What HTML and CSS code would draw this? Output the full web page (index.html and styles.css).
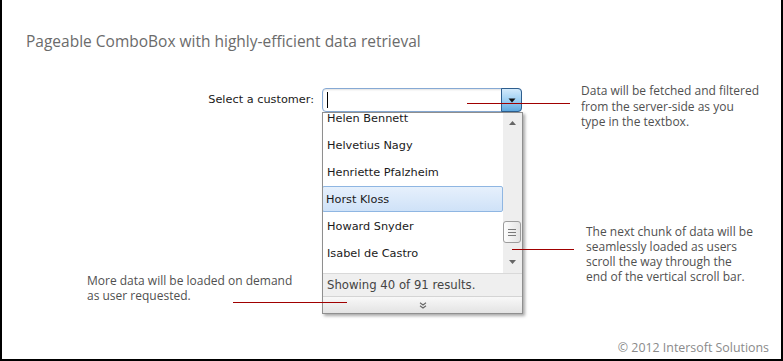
FILE: index.html
```html
<!DOCTYPE html>
<html>
<head>
<meta charset="utf-8">
<link rel="stylesheet" href="styles.css">
</head>
<body>
<div class="frame">
  <h1 class="title">Pageable ComboBox with highly-efficient data retrieval</h1>
  <div class="row">
    <label class="label">Select a customer:</label>
    <div class="combo">
      <div class="input">
        <span class="caret"></span>
        <span class="btn"><svg width="8" height="5" viewBox="0 0 8 5"><path d="M0.5 0.5 H7.5 L4 4.5 Z" fill="#111"/></svg></span>
      </div>
      <div class="dropdown">
        <div class="body">
          <div class="items">
            <div class="list">
              <div class="item">Helen Bennett</div>
              <div class="item">Helvetius Nagy</div>
              <div class="item">Henriette Pfalzheim</div>
              <div class="item selected">Horst Kloss</div>
              <div class="item">Howard Snyder</div>
              <div class="item">Isabel de Castro</div>
            </div>
          </div>
          <div class="scroll">
            <div class="arrow"><svg width="7" height="4" viewBox="0 0 7 4"><path d="M0 4 H7 L3.5 0 Z" fill="#666"/></svg></div>
            <div class="track">
              <div class="thumb"><span></span><span></span><span></span></div>
            </div>
            <div class="arrow down"><svg width="7" height="4" viewBox="0 0 7 4"><path d="M0 0 H7 L3.5 4 Z" fill="#666"/></svg></div>
          </div>
        </div>
        <div class="status">Showing 40 of 91 results.</div>
        <div class="pager"><svg width="8" height="7" viewBox="0 0 8 7"><path d="M1 0.8 L4 3 L7 0.8 M1 3.8 L4 6 L7 3.8" fill="none" stroke="#666" stroke-width="1.1"/></svg></div>
      </div>
    </div>
  </div>
  <div class="copyright">© 2012 Intersoft Solutions</div>

  <div class="note note1">Data will be fetched and filtered<br>from the server-side as you<br>type in the textbox.</div>
  <div class="note note2">The next chunk of data will be<br>seamlessly loaded as users<br>scroll the way through the<br>end of the vertical scroll bar.</div>
  <div class="note note3">More data will be loaded on demand<br>as user requested.</div>
  <div class="line line1"></div>
  <div class="line line2"></div>
  <div class="line line3"></div>
</div>
</body>
</html>
```
FILE: styles.css
```css
html, body {
  margin: 0;
  padding: 0;
  background: #fff;
}
.frame {
  position: relative;
  box-sizing: border-box;
  width: 783px;
  height: 361px;
  border: 2px solid #000;
  border-top: none;
  display: flex;
  flex-direction: column;
  overflow: hidden;
}
.title {
  margin: 0;
  padding: 31px 0 0 24px;
  font: normal 15.5px/20px "Open Sans", sans-serif;
  color: #6b6b6b;
}
.row {
  display: flex;
  align-items: center;
  gap: 8px;
  margin-top: 37px;
}
.label {
  width: 312px;
  text-align: right;
  font: 11.3px/24px "DejaVu Sans", sans-serif;
  color: #1a1a1a;
}
.combo {
  position: relative;
}
.input {
  box-sizing: border-box;
  width: 200px;
  height: 24px;
  border: 1px solid #86a9d4;
  border-radius: 4px;
  background: #fff;
  box-shadow: inset 0 1px 2px rgba(0,0,0,0.12);
  display: flex;
  align-items: center;
  justify-content: space-between;
}
.caret {
  width: 1px;
  height: 16px;
  margin-left: 4px;
  background: #000;
}
.btn {
  box-sizing: border-box;
  width: 21px;
  height: 24px;
  margin-right: -1px;
  border: 1px solid #2e5e8e;
  border-radius: 0 4px 4px 0;
  background: linear-gradient(#d3eafb, #9fd0f3 50%, #5ea9e0);
  display: flex;
  align-items: center;
  justify-content: center;
}
.dropdown {
  position: absolute;
  left: 0;
  top: 24px;
  box-sizing: border-box;
  width: 201px;
  height: 202px;
  border: 1px solid #8f8f8f;
  background: #fff;
  box-shadow: 2px 2px 3px rgba(0,0,0,0.35);
  display: flex;
  flex-direction: column;
}
.body {
  display: flex;
  height: 160px;
}
.items {
  width: 180px;
  overflow: hidden;
}
.list {
  margin-top: -8px;
}
.item {
  box-sizing: border-box;
  height: 27px;
  padding-left: 4px;
  font: 11.3px/27px "DejaVu Sans", sans-serif;
  color: #1a1a1a;
  white-space: nowrap;
}
.item.selected {
  height: 26px;
  margin-bottom: 1px;
  padding-left: 3px;
  line-height: 25px;
  border: 1px solid #8fb6e2;
  border-radius: 2px;
  background: linear-gradient(#e6f0fc, #cfe2f8);
  margin-left: -1px;
}
.scroll {
  width: 19px;
  background: #eeeeee;
  display: flex;
  flex-direction: column;
}
.arrow {
  height: 20px;
  display: flex;
  align-items: center;
  justify-content: center;
}
.arrow.down {
  height: 22px;
}
.track {
  flex: 1;
}
.thumb {
  box-sizing: border-box;
  width: 18px;
  height: 22px;
  margin-top: 88px;
  border: 1px solid #9c9c9c;
  border-radius: 3px;
  background: linear-gradient(90deg, #fdfdfd, #e4e4e4);
  display: flex;
  flex-direction: column;
  align-items: center;
  justify-content: center;
  gap: 2px;
}
.thumb span {
  width: 8px;
  height: 1px;
  background: #7a7a7a;
}
.status {
  box-sizing: border-box;
  height: 23px;
  border-top: 1px solid #d9d9d9;
  background: #efefef;
  padding-left: 4px;
  font: 11.7px/22px "DejaVu Sans", sans-serif;
  color: #444;
}
.pager {
  flex: 1;
  border-top: 1px solid #d4d4d4;
  background: linear-gradient(#f8f8f8, #e3e3e3);
  display: flex;
  align-items: center;
  justify-content: center;
}
.copyright {
  margin-top: auto;
  margin-bottom: 3px;
  padding-right: 12px;
  text-align: right;
  font: 12.4px/16px "Open Sans", sans-serif;
  color: #8a8a8a;
}
.note {
  position: absolute;
  font: 12px "Open Sans", sans-serif;
  color: #505050;
  white-space: nowrap;
}
.note1 {
  left: 579px;
  top: 83px;
  line-height: 15.5px;
}
.note2 {
  left: 584px;
  top: 224px;
  line-height: 15px;
}
.note3 {
  left: 85px;
  top: 274px;
  line-height: 14.5px;
}
.line {
  position: absolute;
  height: 1px;
  background: #a00000;
}
.line1 {
  left: 465px;
  top: 103px;
  width: 103px;
}
.line2 {
  left: 510px;
  top: 249px;
  width: 62px;
}
.line3 {
  left: 231px;
  top: 302px;
  width: 114px;
}
```
